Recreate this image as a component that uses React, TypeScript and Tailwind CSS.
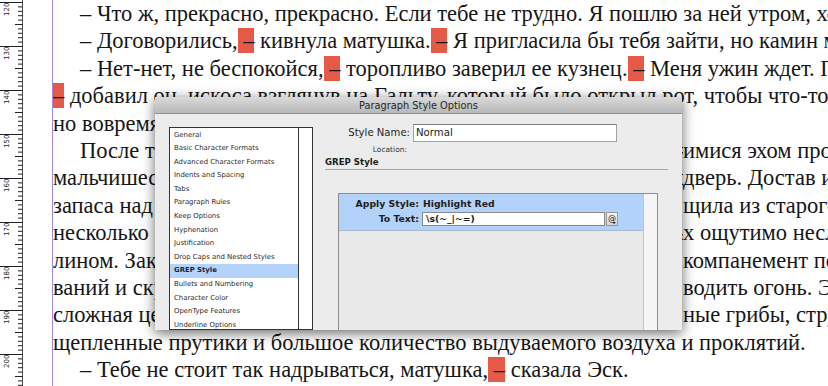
import type { ReactNode } from 'react'

const listItems = [
  'General',
  'Basic Character Formats',
  'Advanced Character Formats',
  'Indents and Spacing',
  'Tabs',
  'Paragraph Rules',
  'Keep Options',
  'Hyphenation',
  'Justification',
  'Drop Caps and Nested Styles',
  'GREP Style',
  'Bullets and Numbering',
  'Character Color',
  'OpenType Features',
  'Underline Options',
  'Export Tagging',
]

function HL({ children }: { children: ReactNode }) {
  return <span className="bg-[#e45a47]">{children}</span>
}

function Line({ indent, children }: { indent?: boolean; children: ReactNode }) {
  return <div className={`whitespace-nowrap ${indent ? 'pl-[27px]' : ''}`}>{children}</div>
}

// line whose middle is hidden under the dialog: right part starts where the dialog ends
function SplitLine({ indent, left, right }: { indent?: boolean; left: string; right: string }) {
  return (
    <div className={`flex whitespace-nowrap ${indent ? 'pl-[27px]' : ''}`}>
      <span className={`${indent ? 'w-[603px]' : 'w-[630px]'} shrink-0 overflow-hidden`}>{left}</span>
      <span>{right}</span>
    </div>
  )
}

function Ruler() {
  const ticks = []
  for (let i = -10; i < 100; i++) {
    const y = 2 + i * 4.4
    if (y < 0 || y > 386) continue
    const major = i % 10 === 0
    const mid = i % 5 === 0
    ticks.push(
      <line
        key={i}
        x1={major ? 0 : mid ? 15 : 18}
        x2={23}
        y1={y + 0.5}
        y2={y + 0.5}
        stroke="#222"
        strokeWidth={1}
      />
    )
  }
  const labels = []
  for (let k = 0; k < 9; k++) {
    const y = 2 + k * 44
    labels.push(
      <text
        key={k}
        x={0}
        y={0}
        transform={`translate(9 ${y + 14}) rotate(-90)`}
        fontSize="7"
        fontFamily="DejaVu Sans, sans-serif"
        fill="#222"
      >
        {120 + k * 10}
      </text>
    )
  }
  return (
    <svg width="23" height="386" className="shrink-0 bg-white">
      <line x1="22.5" x2="22.5" y1="0" y2="386" stroke="#555" />
      {ticks}
      {labels}
    </svg>
  )
}

function Dialog() {
  return (
    <div className="absolute left-[155px] top-[97px] h-[233px] w-[527px] overflow-hidden bg-[#ececec] font-['DejaVu_Sans',sans-serif] text-[#1e1e1e] shadow-[0_3px_12px_rgba(0,0,0,0.6)]">
      <div className="h-[17px] border-b border-[#909090] bg-gradient-to-b from-[#dadada] to-[#b8b8b8] text-center text-[9.8px] leading-[17px] text-[#262626]">
        Paragraph Style Options
      </div>
      <div className="flex">
        <div className="ml-[14px] mt-[13px] flex h-[203px] w-[144px] shrink-0 border border-[#333] bg-white">
          <div className="flex-1 pt-[0.5px]">
            {listItems.map(item => (
              <div
                key={item}
                className={`h-[13.6px] whitespace-nowrap pl-[4px] text-[6.9px] leading-[13.6px] ${
                  item === 'GREP Style' ? 'bg-[#b5d3fa] font-bold text-[#16233b]' : 'text-[#2a2a2a]'
                }`}
              >
                {item}
              </div>
            ))}
          </div>
          <div className="w-[14px] border-l border-[#333]" />
        </div>

        <div className="ml-[12px] w-[343px]">
          <div className="mt-[10px] flex h-[18px] items-center">
            <div className="w-[85px] text-right text-[10.1px]">Style Name:</div>
            <div className="ml-[3px] h-[18px] w-[204px] border border-[#a0a0a0] border-t-[#7d7d7d] bg-white pl-[2px] text-[10.2px] leading-[16px]">
              Normal
            </div>
          </div>
          <div className="mt-[3px] h-[10px] w-[82px] text-right text-[7.5px] leading-[10px] text-[#333]">Location:</div>
          <div className="mt-[1px] h-[14px] border-b border-[#a8a8a8] text-[8.6px] font-bold leading-[13px]">GREP Style</div>

          <div className="ml-[13px] mt-[23px] flex h-[150px] w-[320px] border border-[#8d8d8d] bg-[#e9e9e9]">
            <div className="flex-1">
              <div className="h-[37px] border-b border-[#aab9cd] bg-[#b3d2f9] pt-[4px] text-[9.3px] font-bold">
                <div className="flex h-[12px] items-center leading-[12px]">
                  <span className="w-[80px] text-right">Apply Style:</span>
                  <span className="ml-[4px] whitespace-nowrap">Highlight Red</span>
                </div>
                <div className="mt-[2px] flex h-[14px] items-center">
                  <span className="w-[80px] text-right">To Text:</span>
                  <div className="ml-[3px] h-[14px] w-[183px] border border-[#8a8a8a] bg-white pl-[3px] leading-[12px]">
                    {'\\s(~_|~=)'}
                  </div>
                  <div className="relative ml-[1px] flex h-[14px] w-[12px] items-center justify-center border border-[#9a9a9a] bg-gradient-to-b from-[#f4f4f4] to-[#d6d6d6] text-[8px] font-normal leading-none">
                    @
                    <span className="absolute bottom-[1px] right-[1px] h-0 w-0 border-l-[2px] border-r-[2px] border-t-[2px] border-l-transparent border-r-transparent border-t-[#222]" />
                  </div>
                </div>
              </div>
            </div>
            <div className="w-[14px] border-l border-[#c4c4c4] bg-[#f5f5f5]" />
          </div>
        </div>
      </div>
    </div>
  )
}

export default function App() {
  return (
    <div className="relative flex h-[386px] w-[828px] overflow-hidden bg-white">
      <Ruler />
      <div className="ml-[29px] min-w-0 flex-1 overflow-hidden border-l border-[#a58ad8] font-['Liberation_Serif',serif] text-[22.5px] leading-[27.4px] text-[#161616]">
        <Line indent>– Что ж, прекрасно, прекрасно. Если тебе не трудно. Я пошлю за ней утром, хорошо?</Line>
        <Line indent>
          – Договорились,<HL> –</HL> кивнула матушка.<HL> –</HL> Я пригласила бы тебя зайти, но камин может погаснуть.
        </Line>
        <Line indent>
          – Нет-нет, не беспокойся,<HL> –</HL> торопливо заверил ее кузнец.<HL> –</HL> Меня ужин ждет. Пойдем,
        </Line>
        <Line>
          <HL>–</HL> добавил он, искоса взглянув на Гальту, который было открыл рот, чтобы что-то сказать,
        </Line>
        <Line>но вовремя спохватился.</Line>
        <SplitLine
          indent
          left="После того как за ними закрылась дверь, в доме еще долго стояла тишина, полнившаяся отдающ"
          right="имися эхом прощаний"
        />
        <SplitLine left="мальчишеских голосов, а затем матушка тщательно заперла на засов" right="дверь. Достав из" />
        <SplitLine left="запаса над очагом охапку хвороста, она выта" right="щила из старого сундука" />
        <SplitLine left="несколько свечей, и в их свете кожаные переплеты книг, от которы" right="х ощутимо несло" />
        <SplitLine left="лином. Закрыв дверь, она принялась разжигать огонь под ак" right="компанемент постоянных" />
        <SplitLine left="ваний и скрипа половиц. Разжечь огонь – это нелегкое дело. Раз" right="водить огонь. Это" />
        <SplitLine left="сложная церемония, в которой участвуют толченые сушен" right="ные грибы, стружки" />
        <Line>щепленные прутики и большое количество выдуваемого воздуха и проклятий.</Line>
        <Line indent>
          – Тебе не стоит так надрываться, матушка,<HL> –</HL> сказала Эск.
        </Line>
      </div>
      <Dialog />
    </div>
  )
}
